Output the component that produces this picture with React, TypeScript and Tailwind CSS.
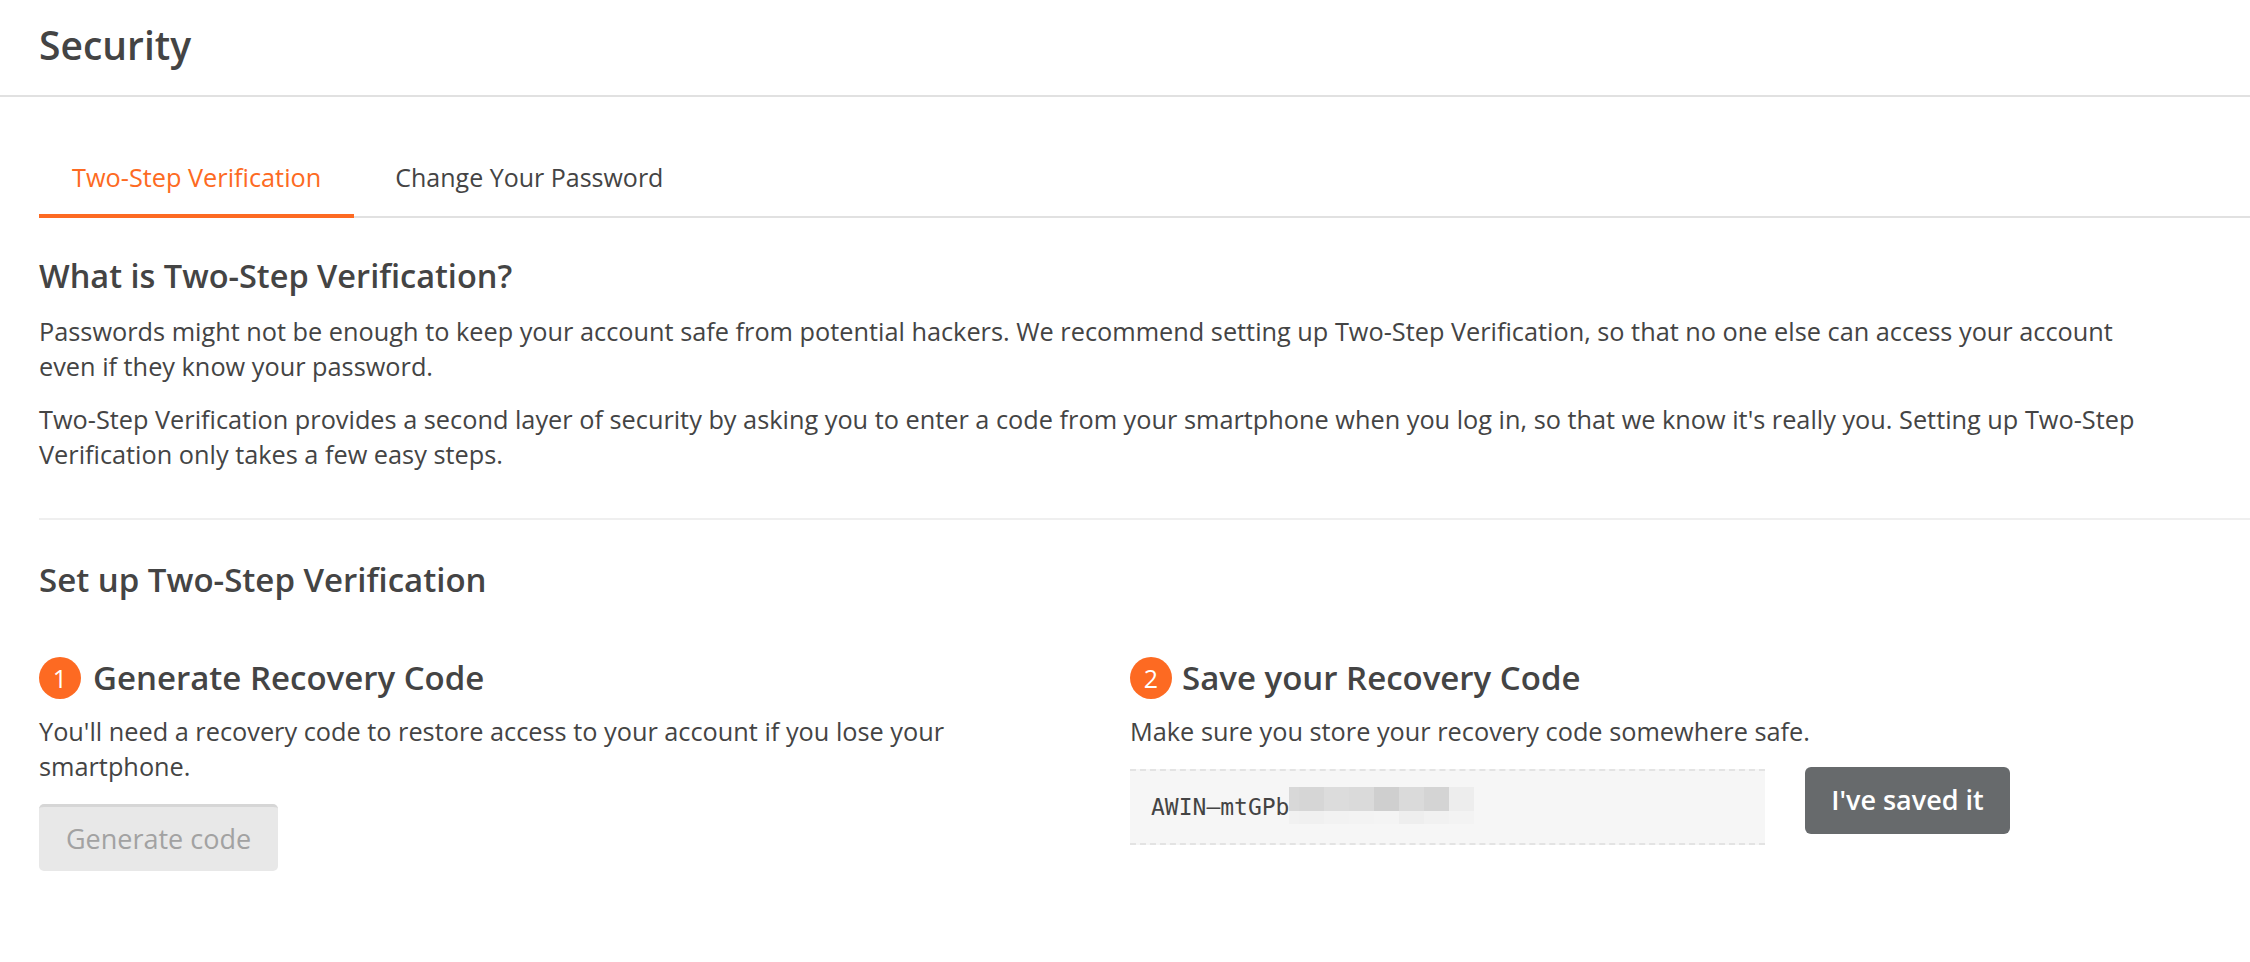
import React from "react";

const row1 = ["#d8d8d8", "#d6d6d6", "#dcdcdc", "#dadada", "#cfcfcf", "#dadada", "#d4d4d4", "#ededed"];
const row2 = ["#f1f1f1", "#f0f0f0", "#f2f2f2", "#f3f3f3", "#f4f4f4", "#eeeeee", "#f1f1f1", "#f3f3f3"];
const widths = [10, 25, 25, 25, 25, 25, 25, 25];

function Badge({ n }: { n: number }) {
  return (
    <span className="flex h-[42px] w-[42px] shrink-0 items-center justify-center rounded-full bg-[#fd6a22] text-[25px] leading-none text-white">
      {n}
    </span>
  );
}

export default function App() {
  return (
    <div className="min-h-screen bg-white font-['Open_Sans','Lato',sans-serif] text-[#444]">
      <header className="flex h-[97px] items-center border-b-2 border-[#e1e1e1] pl-[39px]">
        <h1 className="-mt-[6px] text-[39px] font-semibold leading-[44px] text-[#444]">Security</h1>
      </header>

      <div className="pl-[39px]">
        <nav className="mt-[43px] flex gap-[8px] border-b-2 border-[#e1e1e1]">
          <button className="-mb-[2px] border-b-4 border-[#fd6a22] px-[33px] pb-[19px] pt-[19px] text-[25.3px] leading-[36px] text-[#fd6a22]">
            Two-Step Verification
          </button>
          <button className="-mb-[2px] border-b-4 border-transparent px-[33px] pb-[19px] pt-[19px] text-[25px] leading-[36px] text-[#444]">
            Change Your Password
          </button>
        </nav>

        <section className="pt-[36px]">
          <h2 className="text-[32.5px] font-semibold leading-[44px]">What is Two-Step Verification?</h2>
          <p className="mt-[16px] max-w-[2160px] text-[25.3px] leading-[35px]">
            Passwords might not be enough to keep your account safe from potential hackers. We recommend setting up
            Two-Step Verification, so that no one else can access your account
            <br />
            even if they know your password.
          </p>
          <p className="mt-[18px] max-w-[2160px] text-[25.3px] leading-[35px]">
            Two-Step Verification provides a second layer of security by asking you to enter a code from your smartphone
            when you log in, so that we know it's really you. Setting up Two-Step Verification only takes a few easy steps.
          </p>
        </section>

        <div className="mt-[46px] border-t-2 border-[#efefef]" />

        <section className="pt-[38px]">
          <h2 className="text-[33px] font-semibold leading-[44px]">Set up Two-Step Verification</h2>

          <div className="mt-[55px] flex">
            <div className="w-[1091px] shrink-0">
              <div className="flex items-center gap-[12px]">
                <Badge n={1} />
                <h3 className="text-[33px] font-semibold leading-[42px]">Generate Recovery Code</h3>
              </div>
              <p className="mt-[15px] max-w-[960px] text-[25.3px] leading-[35px]">
                You'll need a recovery code to restore access to your account if you lose your smartphone.
              </p>
              <button className="mt-[20px] flex h-[67px] w-[239px] items-center justify-center rounded-[5px] border-t-[3px] border-[#d6d6d6] bg-[#e8e8e8] text-[27px] text-[#a2a2a2]">
                Generate code
              </button>
            </div>

            <div className="flex-1">
              <div className="flex items-center gap-[10px]">
                <Badge n={2} />
                <h3 className="text-[33px] font-semibold leading-[42px]">Save your Recovery Code</h3>
              </div>
              <p className="mt-[15px] text-[25.3px] leading-[35px]">Make sure you store your recovery code somewhere safe.</p>
              <div className="mt-[20px] flex items-start">
                <div className="flex h-[76px] w-[635px] items-center border-y-2 border-dashed border-[#e3e3e3] bg-[#f6f6f6] pl-[21px]">
                  <span className="font-['DejaVu_Sans_Mono',monospace] text-[23px] leading-none text-[#444]">AWIN–mtGPb</span>
                  <span className="-mt-[4px] flex flex-col">
                    <span className="flex">
                      {row1.map((c, i) => (
                        <span key={i} className="block h-[24px]" style={{ width: widths[i], backgroundColor: c }} />
                      ))}
                    </span>
                    <span className="flex">
                      {row2.map((c, i) => (
                        <span key={i} className="block h-[13px]" style={{ width: widths[i], backgroundColor: c }} />
                      ))}
                    </span>
                  </span>
                </div>
                <button className="-mt-[2px] ml-[40px] flex h-[67px] w-[205px] items-center justify-center rounded-[6px] bg-[#676a6c] text-[27px] font-semibold text-white">
                  I've saved it
                </button>
              </div>
            </div>
          </div>
        </section>
      </div>
    </div>
  );
}
